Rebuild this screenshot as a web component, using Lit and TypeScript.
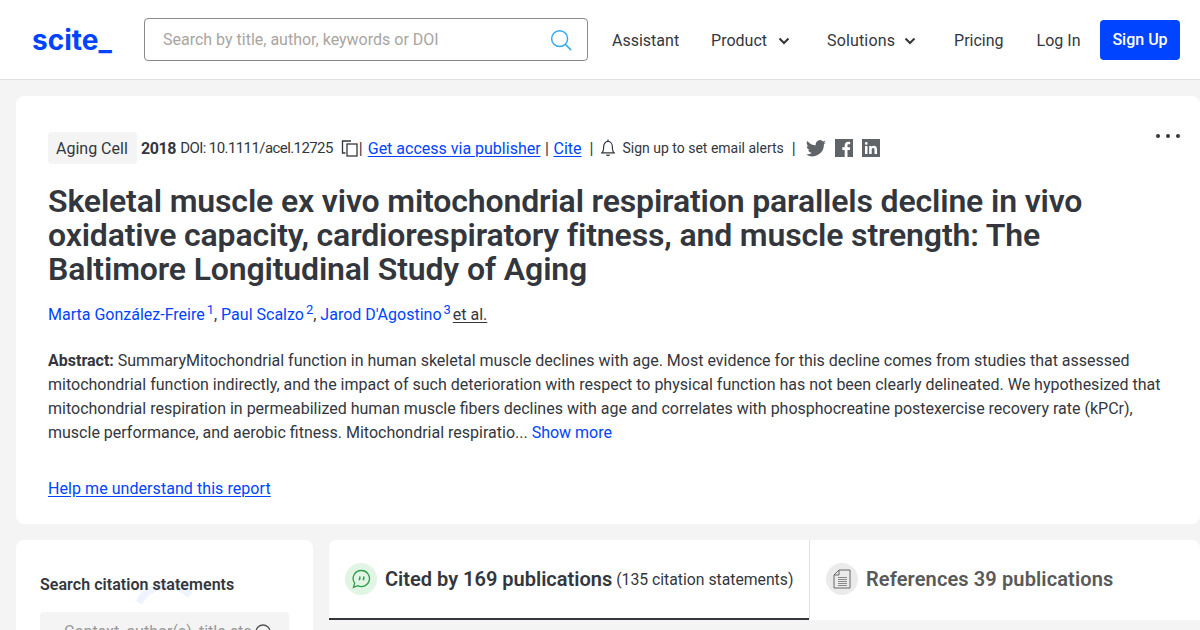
import { LitElement, html, css } from "lit";
import { customElement } from "lit/decorators.js";

@customElement("app-root")
export class AppRoot extends LitElement {
  static styles = css`
    :host { display: block; width: 1200px; height: 630px; overflow: hidden; background: #f4f4f4; font-family: Roboto, "Liberation Sans", sans-serif; color: #33373d; }
    a { color: #0044ff; text-decoration: none; }
    .u { text-decoration: underline; text-underline-offset: 2px; }
    header { height: 79px; background: #fff; border-bottom: 1px solid #e0e0e0; display: flex; align-items: center; padding: 0 20px 0 32px; }
    .logo { width: 112px; font: 700 28px/32px Inter, sans-serif; color: #0044ff; margin-top: 0; }
    .search { width: 444px; height: 43px; box-sizing: border-box; border: 1px solid #8a8a8a; border-radius: 4px; display: flex; align-items: center; justify-content: space-between; padding: 0 15px 0 18px; font-size: 16px; color: #a9a5a1; }
    .nav { flex: 1; display: flex; align-items: center; margin-left: 24px; font-size: 16px; color: #33373d; padding-top: 1px; }
    .nav span { display: flex; align-items: center; gap: 10px; margin-right: 32px; }
    .nav span.dd { margin-right: 36px; }
    .nav span.sol { margin-right: 37px; letter-spacing: 0.15px; gap: 8px; }
    .nav span.price { margin-right: 33px; }
    .nav span.last { margin-right: 0; }
    .nav svg { margin-top: 2px; }
    .signup { margin-left: auto; background: #0044ff; color: #fff; border-radius: 4px; width: 80px; height: 40px; margin-top: -1px; display: flex; align-items: center; justify-content: center; font-weight: 500; }
    main { padding: 16px 0 0 16px; display: flex; flex-direction: column; gap: 16px; }
    .card { position: relative; background: #fff; border-radius: 8px; height: 428px; box-sizing: border-box; padding: 36px 32px 0; }
    .meta { display: flex; align-items: center; height: 32px; font-size: 16px; white-space: nowrap; }
    .chip { background: #f4f4f4; border-radius: 4px; height: 32px; width: 89px; box-sizing: border-box; padding: 0 8px; display: flex; align-items: center; margin-right: 4px; }
    .meta svg { display: block; flex: none; }
    .meta b { letter-spacing: -0.4px; }
    .doi { font-size: 15px; letter-spacing: -0.58px; margin-left: 4px; margin-right: 8px; }
    .bar { margin: 0 5px 0 0; }
    .bar2 { margin: 0 4.5px; }
    .bar3 { margin: 0 8px; }
    .small { font-size: 14px; margin-left: 7px; }
    .tw { margin-left: 2px; }
    .soc { margin-left: 9px; }
    h1 { margin: 20px 0 0; font-size: 32px; line-height: 34px; font-weight: 600; letter-spacing: -0.15px; width: 1080px; }
    .authors { margin-top: 17px; font-size: 16px; line-height: 24px; height: 24px; }
    .authors .u { margin-left: -2px; }
    sup { font-size: 13px; line-height: 0; margin-left: 2px; }
    .abstract { margin-top: 22px; font-size: 16px; line-height: 24px; width: 1125px; }
    .help { margin-top: 32px; font-size: 16px; line-height: 24px; letter-spacing: 0.06px; }
    .dots { position: absolute; top: 38px; right: 20px; display: flex; gap: 6px; }
    .dots i { width: 4px; height: 4px; border-radius: 50%; background: #33373d; }
    .bottom { display: flex; gap: 16px; align-items: flex-start; }
    .side { position: relative; width: 297px; height: 120px; background: #fff; border-radius: 8px 8px 0 0; padding: 34px 24px 0; box-sizing: border-box; }
    .side h3 { position: relative; margin: 0; font-size: 16px; line-height: 22px; font-weight: 600; letter-spacing: 0.05px; }
    .input { margin-top: 16px; height: 40px; background: #f4f4f4; border-radius: 4px; display: flex; justify-content: space-between; padding: 8px 18px 0 24px; box-sizing: border-box; font-size: 16px; line-height: 24px; color: #999; }
    .input svg { margin-top: 4px; }
    .spin { position: absolute; left: 116px; top: 36px; }
    .tabs { flex: 1; display: flex; height: 80px; background: #fff; border-radius: 8px 8px 0 0; }
    .tab { display: flex; align-items: center; gap: 8px; padding: 0 16px; box-sizing: border-box; height: 80px; white-space: nowrap; font-size: 20px; font-weight: 600; border-bottom: 2px solid transparent; }
    .tab.on { width: 480px; border-bottom-color: #33373d; }
    .tab.off { border-left: 1px solid #e0e0e0; color: #595959; letter-spacing: 0.12px; }
    .tab small { font-size: 15.75px; font-weight: 400; margin-left: -4px; }
    .ic { width: 32px; height: 32px; border-radius: 50%; display: flex; align-items: center; justify-content: center; flex: none; }
    .g { background: #e0f5e3; } .n { background: #ebebeb; }
  `;

  render() {
    const chev = html`<svg width="14" height="14" viewBox="0 0 14 14" fill="none" stroke="#33373d" stroke-width="2"><path d="M2.500 4.500L7 9l4.500-4.500"/></svg>`;
    return html`
      <header>
        <div class="logo">scite_</div>
        <div class="search">Search by title, author, keywords or DOI
          <svg width="22" height="22" viewBox="0 0 24 24" fill="none" stroke="#2fa8f5" stroke-width="1.600" stroke-linecap="round"><circle cx="10.500" cy="10.500" r="8.700"/><path d="M17 17l5.500 5.500"/></svg>
        </div>
        <div class="nav">
          <span>Assistant</span>
          <span class="dd">Product ${chev}</span>
          <span class="dd sol">Solutions ${chev}</span>
          <span class="price">Pricing</span>
          <span class="last">Log In</span>
          <a class="signup">Sign Up</a>
        </div>
      </header>
      <main>
        <section class="card">
          <div class="meta">
            <span class="chip">Aging Cell</span>
            <b>2018</b>
            <span class="doi">DOI: 10.1111/acel.12725</span>
            <svg width="18" height="18" viewBox="0 0 18 18" fill="none" stroke="#33373d" stroke-width="1.300"><path d="M10 2H1.500v12H4.500"/><rect x="6" y="5" width="10" height="12"/></svg>
            <span class="bar">|</span><a class="u">Get access via publisher</a><span class="bar2">|</span><a class="u">Cite</a><span class="bar3">|</span>
            <svg width="14" height="18" viewBox="0 0 14 18" fill="none" stroke="#33373d" stroke-width="1.200"><path d="M1 13.800h12c-1.300-1-1.600-2.500-1.600-5.800 0-3-1.800-5.600-4.400-5.600S2.600 5 2.600 8c0 3.300-.3 4.800-1.600 5.800z"/><path d="M7 .5v2M5.500 15.500a1.600 1.600 0 0 0 3 0"/></svg>
            <span class="small">Sign up to set email alerts</span><span class="bar3">|</span>
            <svg class="tw" width="20" height="17" viewBox="0 0 24 20" fill="#5f6468"><path d="M24 2.400a9.800 9.800 0 0 1-2.800.8A4.900 4.900 0 0 0 23.300.500a9.800 9.800 0 0 1-3.100 1.200 4.900 4.900 0 0 0-8.400 4.500A14 14 0 0 1 1.700.900a4.900 4.900 0 0 0 1.500 6.600 4.900 4.900 0 0 1-2.200-.6 4.900 4.900 0 0 0 3.900 4.800 4.900 4.900 0 0 1-2.200.1 4.900 4.900 0 0 0 4.600 3.400A9.900 9.900 0 0 1 0 17.200 14 14 0 0 0 21.500 4.800 10 10 0 0 0 24 2.400z"/></svg>
            <svg class="soc" width="18" height="18" viewBox="0 0 18 18"><path fill="#5f6468" d="M0 0h18v18h-5.500v-7h2.300l.4-2.700h-2.700V6.600c0-.8.200-1.300 1.300-1.300h1.400V2.900c-.3 0-1.100-.1-2-.1-2.100 0-3.500 1.300-3.500 3.600v1.900H7.300V11h2.400v7H0z"/></svg>
            <svg class="soc" width="18" height="18" viewBox="0 0 18 18"><path fill="#5f6468" fill-rule="evenodd" d="M0 0h18v18H0zM3 7v8h2.500V7zM4.250 3a1.400 1.400 0 1 0 0 2.800 1.400 1.400 0 0 0 0-2.800zM7.200 7v8h2.500v-4.200c0-1.200.5-1.900 1.500-1.900s1.300.7 1.300 1.900V15H15v-4.800c0-2.200-1.200-3.400-3-3.400-1.100 0-1.900.5-2.300 1.200V7z"/></svg>
          </div>
          <h1>Skeletal muscle ex vivo mitochondrial respiration parallels decline in vivo oxidative capacity, cardiorespiratory fitness, and muscle strength: The Baltimore Longitudinal Study of Aging</h1>
          <div class="authors"><a>Marta González-Freire<sup>1</sup></a>, <a>Paul Scalzo<sup>2</sup></a>, <a>Jarod D'Agostino<sup>3</sup></a> <span class="u">et al.</span></div>
          <div class="abstract"><b>Abstract:</b> SummaryMitochondrial function in human skeletal muscle declines with age. Most evidence for this decline comes from studies that assessed mitochondrial function indirectly, and the impact of such deterioration with respect to physical function has not been clearly delineated. We hypothesized that mitochondrial respiration in permeabilized human muscle fibers declines with age and correlates with phosphocreatine postexercise recovery rate (kPCr), muscle performance, and aerobic fitness. Mitochondrial respiratio... <a>Show more</a></div>
          <div class="help"><a class="u">Help me understand this report</a></div>
          <div class="dots"><i></i><i></i><i></i></div>
        </section>
        <div class="bottom">
          <aside class="side">
            <svg class="spin" width="70" height="40" viewBox="0 0 70 40" fill="none" stroke="#eef3ff" stroke-width="7"><path d="M7 27C15 9 42 3 58 19"/></svg>
            <h3>Search citation statements</h3>
            <div class="input"><span>Context, author(s), title etc</span><svg width="16" height="16" viewBox="0 0 16 16" fill="none" stroke="#555" stroke-width="1.300"><circle cx="8" cy="8" r="7"/></svg></div>
          </aside>
          <div class="tabs">
            <div class="tab on"><span class="ic g"><svg width="20" height="20" viewBox="0 0 20 20" fill="none" stroke="#2e9e4a" stroke-width="1.300"><path d="M10.500 1.500a8 8 0 1 1-3.700 15.100L2.500 18.300l1.200-4.100A8 8 0 0 1 10.500 1.500z"/><path stroke-width="1.500" d="M8.800 7.500v2.200L8 11.200M12.800 7.500v2.200l-.8 1.500"/></svg></span>Cited by 169 publications <small>(135 citation statements)</small></div>
            <div class="tab off"><span class="ic n"><svg width="18" height="20" viewBox="0 0 18 20" fill="none" stroke="#666" stroke-width="1"><path d="M6 1h11v18H1V6zM6 1v5H1"/><path stroke="#888" d="M5 8.500h9M5 10.500h9M5 12.500h9M5 14.500h9M5 16.500h9"/></svg></span>References 39 publications</div>
          </div>
        </div>
      </main>
    `;
  }
}
